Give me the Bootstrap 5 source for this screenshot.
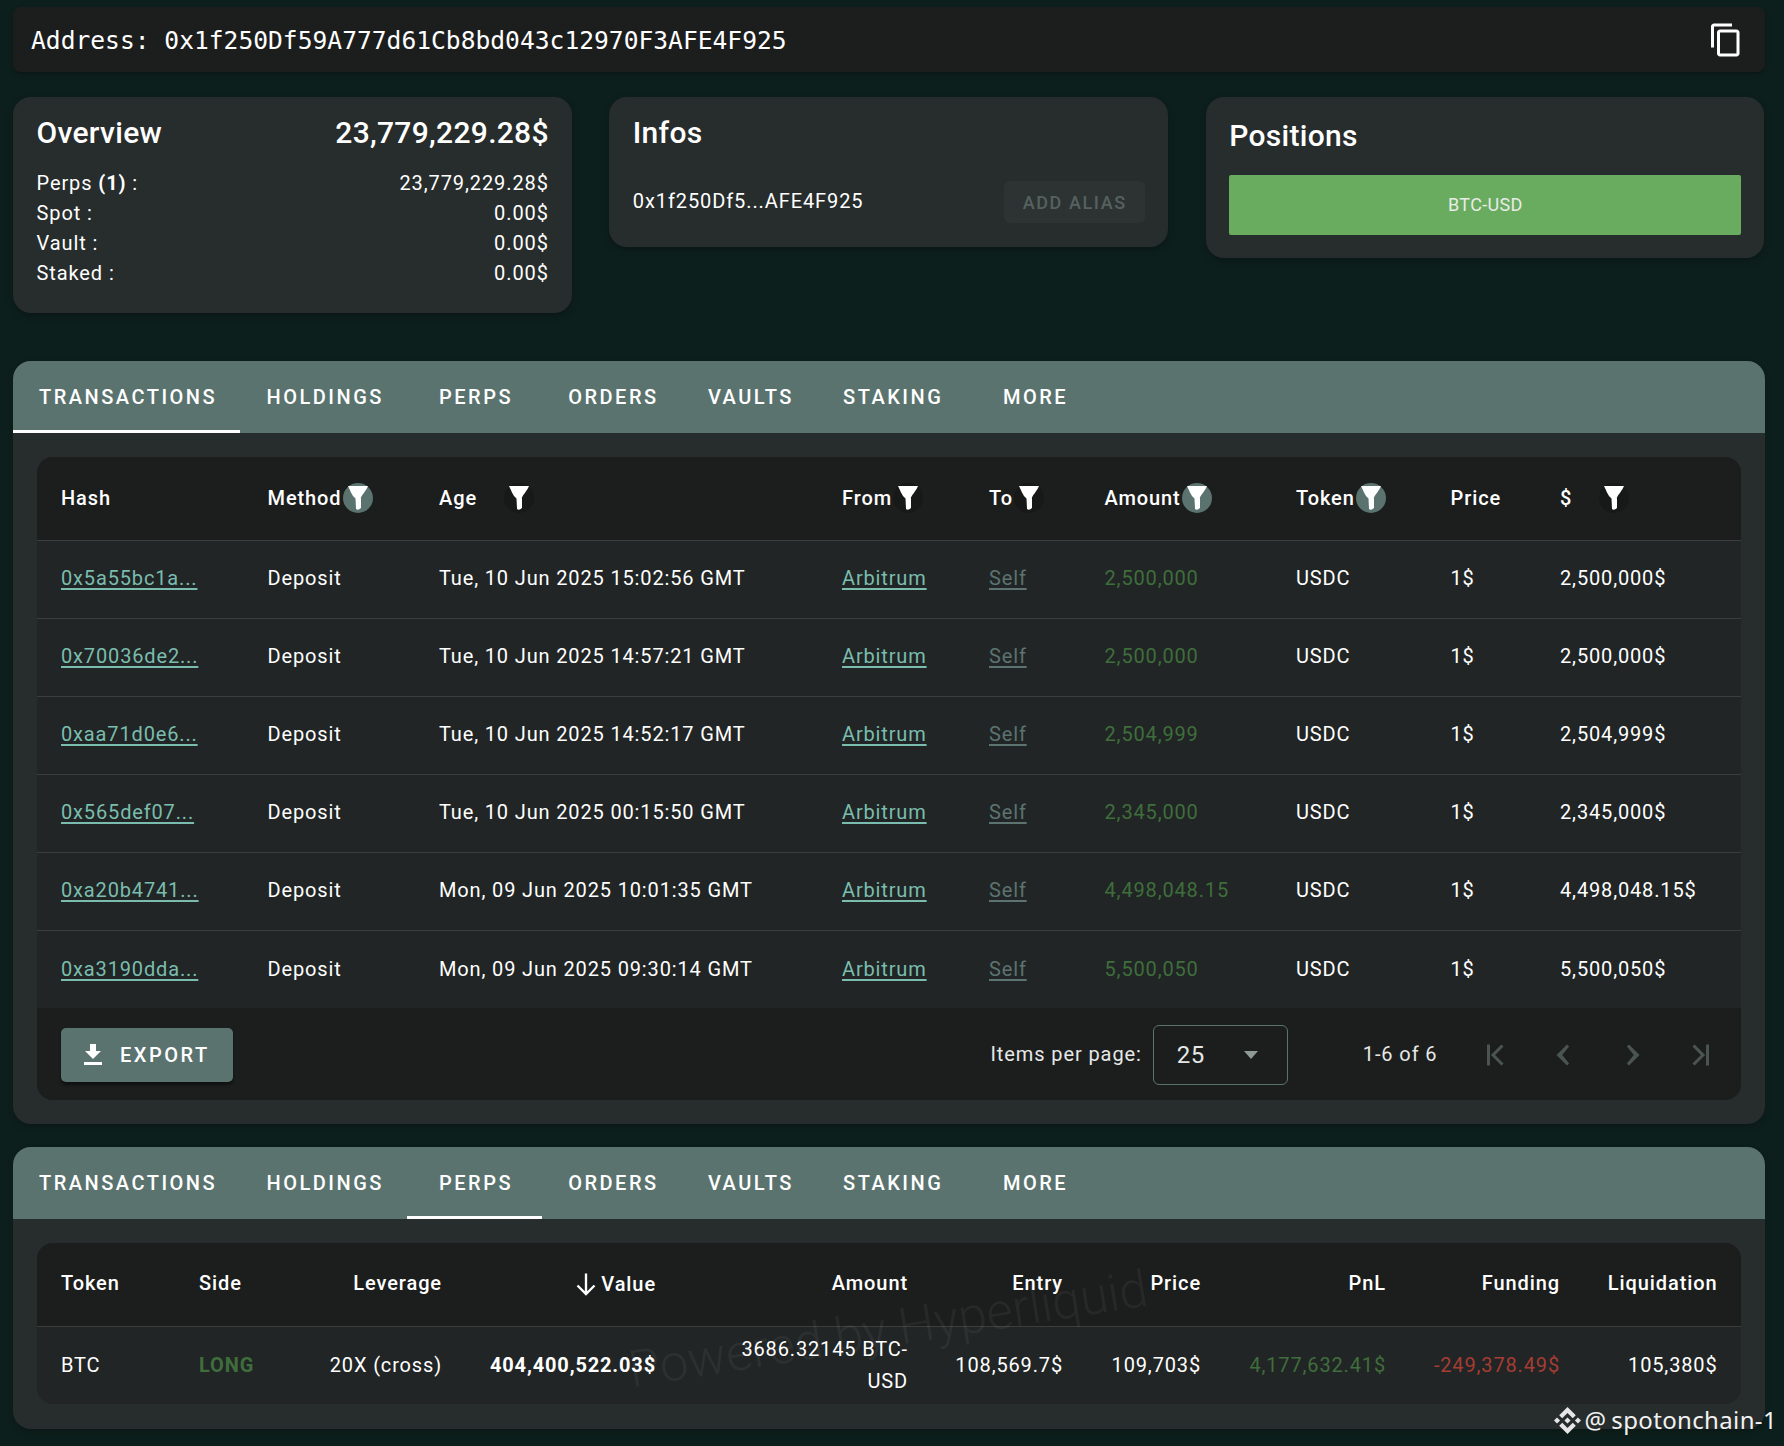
<!doctype html>
<html lang="en"><head><meta charset="utf-8"><title>Address</title>
<link href="https://cdn.jsdelivr.net/npm/bootstrap@5.3.0/dist/css/bootstrap.min.css" rel="stylesheet">
<style>
html,body{height:100%}
body{background:#0d1f1c;color:#fff;font-family:Roboto,"Liberation Sans",sans-serif;font-size:20px;letter-spacing:.9px;padding:7px 19.5px 0 13px;min-height:1446px;overflow:hidden;position:relative}
.addr-bar{height:65px;background:#1c1e1d;border-radius:8px;padding:0 21px 0 18px;margin-bottom:25px;box-shadow:0 2px 4px rgba(0,0,0,.25)}
.addr-text{font-family:"DejaVu Sans Mono",monospace;font-size:24.62px;letter-spacing:0;padding-top:3px}
.info-row{gap:37.5px;margin-bottom:48px}
.sum-card{flex:1 1 0;background:#272c2c;border-radius:18px;padding:18px 23px 18px 23.5px;box-shadow:0 3px 6px rgba(0,0,0,.25)}
.sum-overview{height:216px}
.sum-infos{height:150px}
.sum-pos{height:161px;padding-top:21px}
.sum-title{font-size:30px;font-weight:500;line-height:36px;letter-spacing:.3px}
.sum-lines{margin-top:17px;line-height:30px}
.alias-wrap{margin-top:28px}
.alias-btn{height:42px;width:141px;margin-top:2px;margin-right:0;background:#2d3332;color:#56615f;border:0;border-radius:6px;font-size:18px;font-weight:500;letter-spacing:1.6px;padding:0}
.pos-btn{display:block;width:100%;height:60px;margin-top:21px;background:#69ac60;color:#e8ebe6;border:0;border-radius:2px;font-size:18px;letter-spacing:.3px;padding:0 0 2px}
.panel{background:#272c2c;border-radius:18px;overflow:hidden;position:relative;box-shadow:0 3px 6px rgba(0,0,0,.2)}
.panel-one{height:763px;margin-bottom:23px}
.panel-two{height:282px}
.tabbar{height:72px;background:#5a736f;flex-wrap:nowrap}
.tabbar .nav-link{height:72px;min-width:135px;padding:0 23.3px 0 26px;color:#fff;font-size:20px;font-weight:500;letter-spacing:2.5px;display:flex;align-items:center;justify-content:center;border-bottom:3px solid transparent;border-top:3px solid transparent}
.tabbar .nav-link.active{border-bottom-color:#fff}
.tbl-wrap{margin:24px 24px 0;border-radius:16px;overflow:hidden;background:#212525}
.data-tbl{--bs-table-bg:transparent;--bs-table-color:#fff;--bs-table-border-color:#3a3f3e;table-layout:fixed;margin:0;width:100%;letter-spacing:.85px}
.data-tbl th,.data-tbl td{padding:0 0 2px;vertical-align:middle;border-bottom:1px solid #3a3f3e;box-shadow:none;color:#fff}
.data-tbl thead th{font-weight:500;background:#1c1e1d;height:83px;letter-spacing:.9px;padding-bottom:0}
.data-tbl tbody td{height:78px}
.data-tbl tbody tr:last-child td{border-bottom:0;padding-bottom:0}
.data-tbl th:first-child,.data-tbl td:first-child{padding-left:24px}
.tx-tbl col:nth-child(1){width:230.5px}.tx-tbl col:nth-child(2){width:171.5px}.tx-tbl col:nth-child(3){width:403px}.tx-tbl col:nth-child(4){width:147px}.tx-tbl col:nth-child(5){width:115.5px}.tx-tbl col:nth-child(6){width:191.5px}.tx-tbl col:nth-child(7){width:154.5px}.tx-tbl col:nth-child(8){width:109.5px}
.pp-tbl col:nth-child(1){width:162px}.pp-tbl col:nth-child(2){width:110px}.pp-tbl col:nth-child(3){width:133px}.pp-tbl col:nth-child(4){width:214px}.pp-tbl col:nth-child(5){width:252px}.pp-tbl col:nth-child(6){width:155px}.pp-tbl col:nth-child(7){width:138px}.pp-tbl col:nth-child(8){width:185px}.pp-tbl col:nth-child(9){width:174px}
.pp-tbl thead th{height:83px;padding-bottom:3px}
.pp-tbl tbody td{height:78px;line-height:32px}
.pp-tbl th:nth-child(n+3),.pp-tbl td:nth-child(n+3){text-align:right}
.pp-tbl th:last-child,.pp-tbl td:last-child{padding-right:23px}
.pp-tbl td:nth-child(5){padding-left:80px}
.head-cell{display:inline-flex;align-items:center;vertical-align:middle;margin-bottom:2px}
.pp-tbl .head-cell{margin-bottom:0}
.filter-btn{width:30px;height:30px;border-radius:50%;background:#171818;display:inline-flex;align-items:center;justify-content:center;flex:none}
.filter-btn.on{background:#5a736f}
.filter-btn svg{width:20px;height:24px;fill:#fff}
.gap-s{margin-left:1px}.gap-age{margin-left:27px}.gap-usd{margin-left:27px}
.arrow-ic{margin-right:1px}
.lnk{color:#7abdae;text-decoration:underline;text-underline-offset:3px}
.lnk-dim{color:#5c7370;text-decoration:underline;text-underline-offset:3px}
.data-tbl .pos{color:#3f6e3c}
.data-tbl .neg{color:#a63c33}
.tbl-foot{height:92px;background:#1c1e1d;padding:2px 6.5px 0 24px}
.export-btn{width:172px;height:54px;background:#5a736f;color:#fff;border:0;border-radius:5px;font-size:20px;font-weight:500;letter-spacing:2.5px;padding:0 0 0 23px;box-shadow:0 3px 3px rgba(0,0,0,.45);gap:18px}
.per-label{margin-right:11px;margin-top:-2px;color:#e6e8e7}
.per-box{width:135px;height:60px;border:1px solid #5a736f;border-radius:6px;padding:0 29px 0 23px;font-size:24px;letter-spacing:.5px;margin-right:75px;color:#e6e8e7}
.caret-tri{width:0;height:0;border-left:7px solid transparent;border-right:7px solid transparent;border-top:8px solid #8d9a97}
.range-txt{margin-right:24.5px;margin-top:-2px;color:#e6e8e7}
.page-ic{width:68px;height:40px;padding:0;border:0;background:none;display:flex;align-items:center;justify-content:center}
.page-ic svg{width:36px;height:36px;fill:#4a5553}
.mark-wm{position:absolute;left:622px;top:185px;font-size:51px;font-weight:300;color:rgba(255,255,255,.05);transform:rotate(-9deg);transform-origin:0 100%;white-space:nowrap;pointer-events:none;letter-spacing:0}
.credit{position:absolute;right:7px;top:1404px;font-family:"Noto Sans",sans-serif;font-size:24px;color:#f2f2f2;letter-spacing:.35px;gap:5px;line-height:32px}
.credit svg{width:27px;height:27px;fill:#e6e6e6;margin-right:-2px}
</style></head>
<body>
<div class="addr-bar d-flex align-items-center justify-content-between">
  <span class="addr-text">Address: 0x1f250Df59A777d61Cb8bd043c12970F3AFE4F925</span>
  <svg width="36" height="36" viewBox="0 0 24 24" fill="#fff"><path d="M16 1H4c-1.1 0-2 .9-2 2v14h2V3h12V1zm3 4H8c-1.1 0-2 .9-2 2v14c0 1.1.9 2 2 2h11c1.100 0 2-.9 2-2V7c0-1.100-.9-2-2-2zm0 16H8V7h11v14z"/></svg>
</div>
<div class="info-row d-flex align-items-start">
  <div class="sum-card sum-overview">
    <div class="d-flex justify-content-between sum-title"><span>Overview</span><span>23,779,229.28$</span></div>
    <div class="sum-lines">
      <div class="d-flex justify-content-between"><span>Perps <b class="fw-bold">(1)</b> :</span><span>23,779,229.28$</span></div>
      <div class="d-flex justify-content-between"><span>Spot :</span><span>0.00$</span></div>
      <div class="d-flex justify-content-between"><span>Vault :</span><span>0.00$</span></div>
      <div class="d-flex justify-content-between"><span>Staked :</span><span>0.00$</span></div>
    </div>
  </div>
  <div class="sum-card sum-infos">
    <div class="sum-title">Infos</div>
    <div class="alias-wrap d-flex justify-content-between align-items-center"><span>0x1f250Df5...AFE4F925</span><button class="alias-btn btn">ADD ALIAS</button></div>
  </div>
  <div class="sum-card sum-pos">
    <div class="sum-title">Positions</div>
    <button class="pos-btn btn">BTC-USD</button>
  </div>
</div>

<section class="panel panel-one">
  <nav class="nav tabbar">
    <a class="nav-link active" href="#">TRANSACTIONS</a><a class="nav-link" href="#">HOLDINGS</a><a class="nav-link" href="#">PERPS</a><a class="nav-link" href="#">ORDERS</a><a class="nav-link" href="#">VAULTS</a><a class="nav-link" href="#">STAKING</a><a class="nav-link" href="#">MORE</a>
  </nav>
  <div class="tbl-wrap">
    <table class="table data-tbl tx-tbl">
      <colgroup><col><col><col><col><col><col><col><col><col></colgroup>
      <thead><tr>
        <th>Hash</th>
        <th><span class="head-cell">Method<span class="filter-btn on gap-s"><svg viewBox="0 0 20 24"><path d="M0 0h20q-1 3-4.500 7.500T13 12.500V22q-3 3-5 1l-.500-10.500Q5 11 3 6.500T0 0z"/></svg></span></span></th>
        <th><span class="head-cell">Age<span class="filter-btn gap-age"><svg viewBox="0 0 20 24"><path d="M0 0h20q-1 3-4.500 7.500T13 12.500V22q-3 3-5 1l-.500-10.500Q5 11 3 6.500T0 0z"/></svg></span></span></th>
        <th><span class="head-cell">From<span class="filter-btn gap-s"><svg viewBox="0 0 20 24"><path d="M0 0h20q-1 3-4.500 7.500T13 12.500V22q-3 3-5 1l-.500-10.500Q5 11 3 6.500T0 0z"/></svg></span></span></th>
        <th><span class="head-cell">To<span class="filter-btn gap-s"><svg viewBox="0 0 20 24"><path d="M0 0h20q-1 3-4.500 7.500T13 12.500V22q-3 3-5 1l-.500-10.500Q5 11 3 6.500T0 0z"/></svg></span></span></th>
        <th><span class="head-cell">Amount<span class="filter-btn on gap-s"><svg viewBox="0 0 20 24"><path d="M0 0h20q-1 3-4.500 7.500T13 12.500V22q-3 3-5 1l-.500-10.500Q5 11 3 6.500T0 0z"/></svg></span></span></th>
        <th><span class="head-cell">Token<span class="filter-btn on gap-s"><svg viewBox="0 0 20 24"><path d="M0 0h20q-1 3-4.500 7.500T13 12.500V22q-3 3-5 1l-.500-10.500Q5 11 3 6.500T0 0z"/></svg></span></span></th>
        <th>Price</th>
        <th><span class="head-cell">$<span class="filter-btn gap-usd"><svg viewBox="0 0 20 24"><path d="M0 0h20q-1 3-4.500 7.500T13 12.500V22q-3 3-5 1l-.500-10.500Q5 11 3 6.500T0 0z"/></svg></span></span></th>
      </tr></thead>
      <tbody>
        <tr><td><a class="lnk" href="#">0x5a55bc1a...</a></td><td>Deposit</td><td>Tue, 10 Jun 2025 15:02:56 GMT</td><td><a class="lnk" href="#">Arbitrum</a></td><td><a class="lnk-dim" href="#">Self</a></td><td class="pos">2,500,000</td><td>USDC</td><td>1$</td><td>2,500,000$</td></tr>
        <tr><td><a class="lnk" href="#">0x70036de2...</a></td><td>Deposit</td><td>Tue, 10 Jun 2025 14:57:21 GMT</td><td><a class="lnk" href="#">Arbitrum</a></td><td><a class="lnk-dim" href="#">Self</a></td><td class="pos">2,500,000</td><td>USDC</td><td>1$</td><td>2,500,000$</td></tr>
        <tr><td><a class="lnk" href="#">0xaa71d0e6...</a></td><td>Deposit</td><td>Tue, 10 Jun 2025 14:52:17 GMT</td><td><a class="lnk" href="#">Arbitrum</a></td><td><a class="lnk-dim" href="#">Self</a></td><td class="pos">2,504,999</td><td>USDC</td><td>1$</td><td>2,504,999$</td></tr>
        <tr><td><a class="lnk" href="#">0x565def07...</a></td><td>Deposit</td><td>Tue, 10 Jun 2025 00:15:50 GMT</td><td><a class="lnk" href="#">Arbitrum</a></td><td><a class="lnk-dim" href="#">Self</a></td><td class="pos">2,345,000</td><td>USDC</td><td>1$</td><td>2,345,000$</td></tr>
        <tr><td><a class="lnk" href="#">0xa20b4741...</a></td><td>Deposit</td><td>Mon, 09 Jun 2025 10:01:35 GMT</td><td><a class="lnk" href="#">Arbitrum</a></td><td><a class="lnk-dim" href="#">Self</a></td><td class="pos">4,498,048.15</td><td>USDC</td><td>1$</td><td>4,498,048.15$</td></tr>
        <tr><td><a class="lnk" href="#">0xa3190dda...</a></td><td>Deposit</td><td>Mon, 09 Jun 2025 09:30:14 GMT</td><td><a class="lnk" href="#">Arbitrum</a></td><td><a class="lnk-dim" href="#">Self</a></td><td class="pos">5,500,050</td><td>USDC</td><td>1$</td><td>5,500,050$</td></tr>
      </tbody>
    </table>
    <div class="tbl-foot d-flex align-items-center">
      <button class="export-btn btn d-flex align-items-center"><svg width="18" height="22" viewBox="0 0 18 22" fill="#fff"><path d="M6 0h6v7h5l-8 8-8-8h5zM0 18h18v3H0z"/></svg>EXPORT</button>
      <span class="per-label ms-auto">Items per page:</span>
      <div class="per-box d-flex align-items-center justify-content-between"><span>25</span><span class="caret-tri"></span></div>
      <span class="range-txt">1-6 of 6</span>
      <button class="page-ic btn"><svg viewBox="0 0 24 24"><path d="M6 5h2v14H6zM17 6.400 15.600 5l-7 7 7 7 1.400-1.400L11.400 12z"/></svg></button>
      <button class="page-ic btn"><svg viewBox="0 0 24 24"><path d="M15.400 6.400 14 5l-7 7 7 7 1.400-1.400L10.800 12z"/></svg></button>
      <button class="page-ic btn"><svg viewBox="0 0 24 24"><path d="M8.600 6.400 10 5l7 7-7 7-1.400-1.400 4.600-5.600z"/></svg></button>
      <button class="page-ic btn"><svg viewBox="0 0 24 24"><path d="M16 5h2v14h-2zM7 6.400 8.400 5l7 7-7 7L7 17.600 12.600 12z"/></svg></button>
    </div>
  </div>
</section>

<section class="panel panel-two">
  <nav class="nav tabbar">
    <a class="nav-link" href="#">TRANSACTIONS</a><a class="nav-link" href="#">HOLDINGS</a><a class="nav-link active" href="#">PERPS</a><a class="nav-link" href="#">ORDERS</a><a class="nav-link" href="#">VAULTS</a><a class="nav-link" href="#">STAKING</a><a class="nav-link" href="#">MORE</a>
  </nav>
  <div class="tbl-wrap">
    <table class="table data-tbl pp-tbl">
      <colgroup><col><col><col><col><col><col><col><col><col><col></colgroup>
      <thead><tr>
        <th>Token</th><th>Side</th><th>Leverage</th>
        <th><span class="head-cell"><svg class="arrow-ic" width="28" height="28" viewBox="0 0 24 24" fill="#fff"><path d="M11 3h2v15.200l5.600-5.600L20 14l-8 8-8-8 1.400-1.400 5.600 5.600z"/></svg>Value</span></th>
        <th>Amount</th><th>Entry</th><th>Price</th><th>PnL</th><th>Funding</th><th>Liquidation</th>
      </tr></thead>
      <tbody><tr>
        <td>BTC</td><td class="pos fw-bold">LONG</td><td>20X (cross)</td><td class="fw-bold">404,400,522.03$</td><td>3686.32145 BTC-USD</td><td>108,569.7$</td><td>109,703$</td><td class="pos">4,177,632.41$</td><td class="neg">-249,378.49$</td><td>105,380$</td>
      </tr></tbody>
    </table>
  </div>
  <div class="mark-wm">Powered by Hyperliquid</div>
</section>

<div class="credit d-flex align-items-center">
  <svg viewBox="0 0 126.610 126.610"><path d="M38.730 53.200l24.590-24.580 24.600 24.600 14.300-14.310L63.320 0 24.430 38.900zM0 63.310l14.300-14.310 14.310 14.310-14.310 14.300zm38.730 10.110l24.590 24.590 24.600-24.600 14.310 14.290-38.900 38.910-38.910-38.880-.02-.02zm59.250-10.100l14.300-14.310 14.320 14.300-14.310 14.310zM77.830 63.300L63.320 48.780 52.590 59.510l-1.240 1.230-2.540 2.540 14.510 14.500 14.510-14.470z"/></svg>
  <span>@</span><span>spotonchain-1</span>
</div>
</body></html>
